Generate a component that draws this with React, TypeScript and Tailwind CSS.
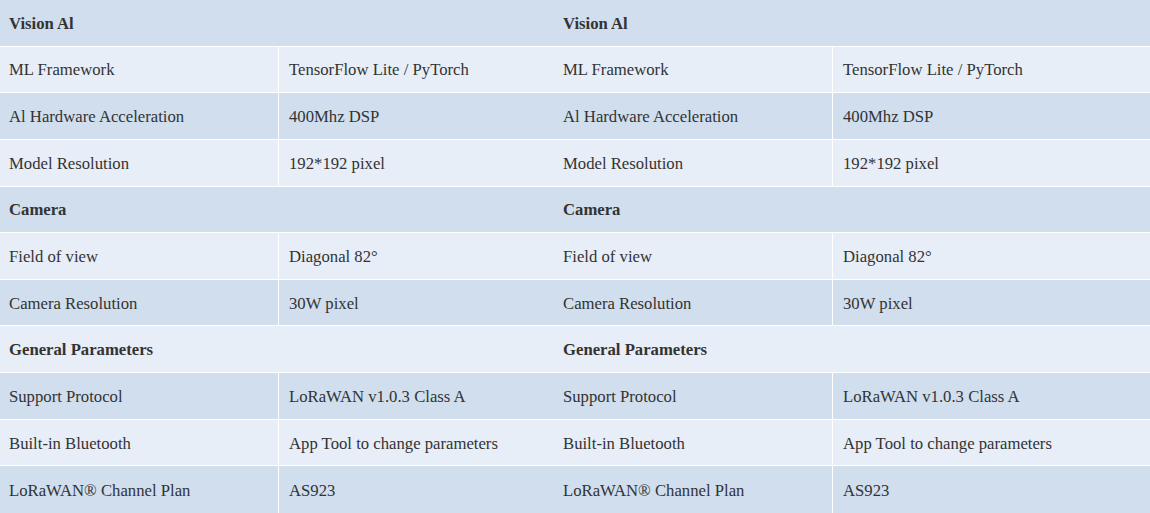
type Row = { label: string; value?: string; section?: boolean };

const rows: Row[] = [
  { label: 'Vision Al', section: true },
  { label: 'ML Framework', value: 'TensorFlow Lite / PyTorch' },
  { label: 'Al Hardware Acceleration', value: '400Mhz DSP' },
  { label: 'Model Resolution', value: '192*192 pixel' },
  { label: 'Camera', section: true },
  { label: 'Field of view', value: 'Diagonal 82°' },
  { label: 'Camera Resolution', value: '30W pixel' },
  { label: 'General Parameters', section: true },
  { label: 'Support Protocol', value: 'LoRaWAN v1.0.3 Class A' },
  { label: 'Built-in Bluetooth', value: 'App Tool to change parameters' },
  { label: 'LoRaWAN® Channel Plan', value: 'AS923' },
];

function SpecTable({ width, valueWidth }: { width: string; valueWidth: string }) {
  return (
    <div className={`flex flex-col ${width}`}>
      {rows.map((row, i) => {
        const bg = i % 2 === 0 ? 'bg-[#d0deee]' : 'bg-[#e7eef7]';
        const border = i < rows.length - 1 ? 'border-b border-white' : '';
        if (row.section) {
          return (
            <div key={i} className={`flex h-[46.67px] items-center pl-[9px] pt-[1px] font-bold ${bg} ${border}`}>
              {row.label}
            </div>
          );
        }
        return (
          <div key={i} className={`flex h-[46.67px] ${bg} ${border}`}>
            <div className="flex w-[278px] shrink-0 items-center pl-[9px] pt-[1px]">{row.label}</div>
            <div className={`flex ${valueWidth} items-center border-l border-white pl-[10px] pt-[1px]`}>{row.value}</div>
          </div>
        );
      })}
    </div>
  );
}

export default function App() {
  return (
    <div
      className="flex w-[1150px] h-[513px] overflow-hidden text-[16.7px] text-[#333333] bg-white"
      style={{ fontFamily: '"Liberation Serif", "Times New Roman", serif' }}
    >
      <SpecTable width="w-[554px]" valueWidth="w-[276px]" />
      <SpecTable width="w-[596px]" valueWidth="w-[318px]" />
    </div>
  );
}
